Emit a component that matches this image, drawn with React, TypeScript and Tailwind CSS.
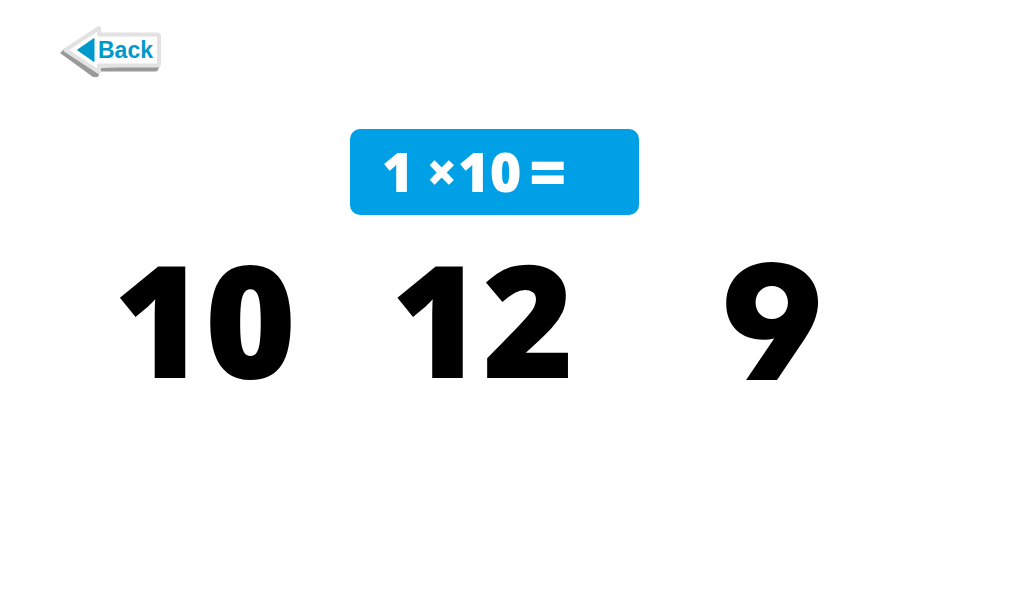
type Answer = { value: number; face: string };

const answers: Answer[] = [
  { value: 10, face: "pr-6 font-['Open_Sans',sans-serif] text-[156px] font-extrabold" },
  { value: 12, face: "pr-6 font-['Open_Sans',sans-serif] text-[156px] font-extrabold" },
  {
    value: 9,
    face: "pt-1 font-['Inter',sans-serif] text-[160px] font-black [font-feature-settings:'cv04','ss01']",
  },
];

function BackLink() {
  return (
    <a href="#back" aria-label="Back" className="block w-[102px]">
      <svg viewBox="0 0 102 52" className="block w-full">
        <path
          d="M0 27 L5 22 L38 42 L100 39 L98 44 Q97 45.5 95 45.5 H40 L38 51 H33 Z"
          fill="#999999"
        />
        <path
          d="M39 2 V8.5 H97 Q99 8.5 99 10.5 V37.5 Q99 39.5 97 39.5 H39 V46 L5.5 24 Z"
          fill="#ffffff"
          stroke="#e2e2e2"
          strokeWidth="4"
          strokeLinejoin="round"
        />
        <path d="M34 12.5 V35.5 L17.5 24 Z" fill="#0099cc" stroke="#0099cc" strokeLinejoin="round" />
        <text
          x="38"
          y="32"
          fill="#0099cc"
          className="font-['Liberation_Sans',Arial,sans-serif] text-[23px] font-bold"
        >
          Back
        </text>
      </svg>
    </a>
  );
}

export default function App() {
  return (
    <div className="min-h-screen bg-white text-black">
      <header className="pt-[26px] pl-[60px]">
        <BackLink />
      </header>
      <main className="flex flex-col items-center pt-[51px] pr-[35px]">
        <h1 className="flex h-[86px] w-[289px] items-center rounded-[10px] bg-[#00a0e6] pb-0.5 pl-8 font-['Open_Sans',sans-serif] text-[54px] leading-none font-extrabold text-white">
          <span className="w-11">1</span>
          <span className="w-8">×</span>
          <span className="w-[71px]">10</span>
          <span className="text-[64px]">=</span>
        </h1>
        <div className="mt-[25px] grid w-full max-w-[833px] grid-cols-3 items-start">
          {answers.map(({ value, face }) => (
            <button
              key={value}
              type="button"
              className={`${face} cursor-pointer text-center leading-[156px]`}
            >
              {value}
            </button>
          ))}
        </div>
      </main>
    </div>
  );
}
